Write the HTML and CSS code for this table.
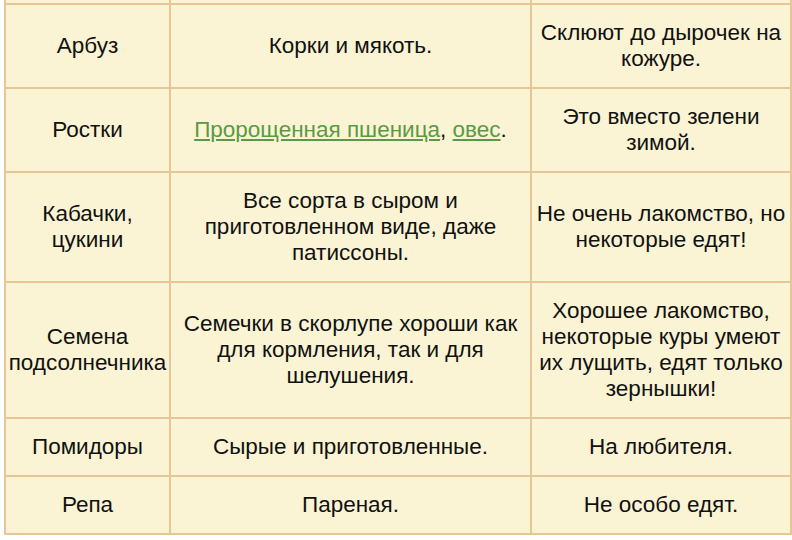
FILE: index.html
```html
<!DOCTYPE html>
<html lang="ru">
<head>
<meta charset="utf-8">
<link rel="stylesheet" href="styles.css">
</head>
<body>
<table class="feed">
  <colgroup>
    <col class="c1">
    <col class="c2">
    <col class="c3">
  </colgroup>
  <tr class="stub"><td></td><td></td><td></td></tr>
  <tr><td>Арбуз</td><td>Корки и мякоть.</td><td>Склюют до дырочек на кожуре.</td></tr>
  <tr><td>Ростки</td><td><a href="#">Пророщенная пшеница</a>, <a href="#">овес</a>.</td><td>Это вместо зелени зимой.</td></tr>
  <tr><td>Кабачки, цукини</td><td>Все сорта в сыром и приготовленном виде, даже патиссоны.</td><td>Не очень лакомство, но некоторые едят!</td></tr>
  <tr><td>Семена подсолнечника</td><td>Семечки в скорлупе хороши как для кормления, так и для шелушения.</td><td>Хорошее лакомство, некоторые куры умеют их лущить, едят только зернышки!</td></tr>
  <tr><td>Помидоры</td><td>Сырые и приготовленные.</td><td>На любителя.</td></tr>
  <tr><td>Репа</td><td>Пареная.</td><td>Не особо едят.</td></tr>
</table>
</body>
</html>
```
FILE: styles.css
```css
html, body {
  margin: 0;
  padding: 0;
  background: #ffffff;
}
body {
  padding-left: 4px;
  font-family: "Liberation Sans", Arial, sans-serif;
}
.feed {
  border-collapse: collapse;
  table-layout: fixed;
  width: 786px;
  background: #faf4d4;
  font-size: 22.5px;
  line-height: 26px;
  color: #111111;
}
.c1 { width: 165px; }
.c2 { width: 361px; }
.c3 { width: 260px; }
.feed td {
  border: 2px solid #e6c697;
  padding: 15px 1px;
  text-align: center;
  vertical-align: middle;
}
.feed .stub td {
  border-top: none;
  padding: 0;
  height: 3px;
  line-height: 0;
}
.feed a {
  color: #5b9a43;
  text-decoration: underline;
}
```
